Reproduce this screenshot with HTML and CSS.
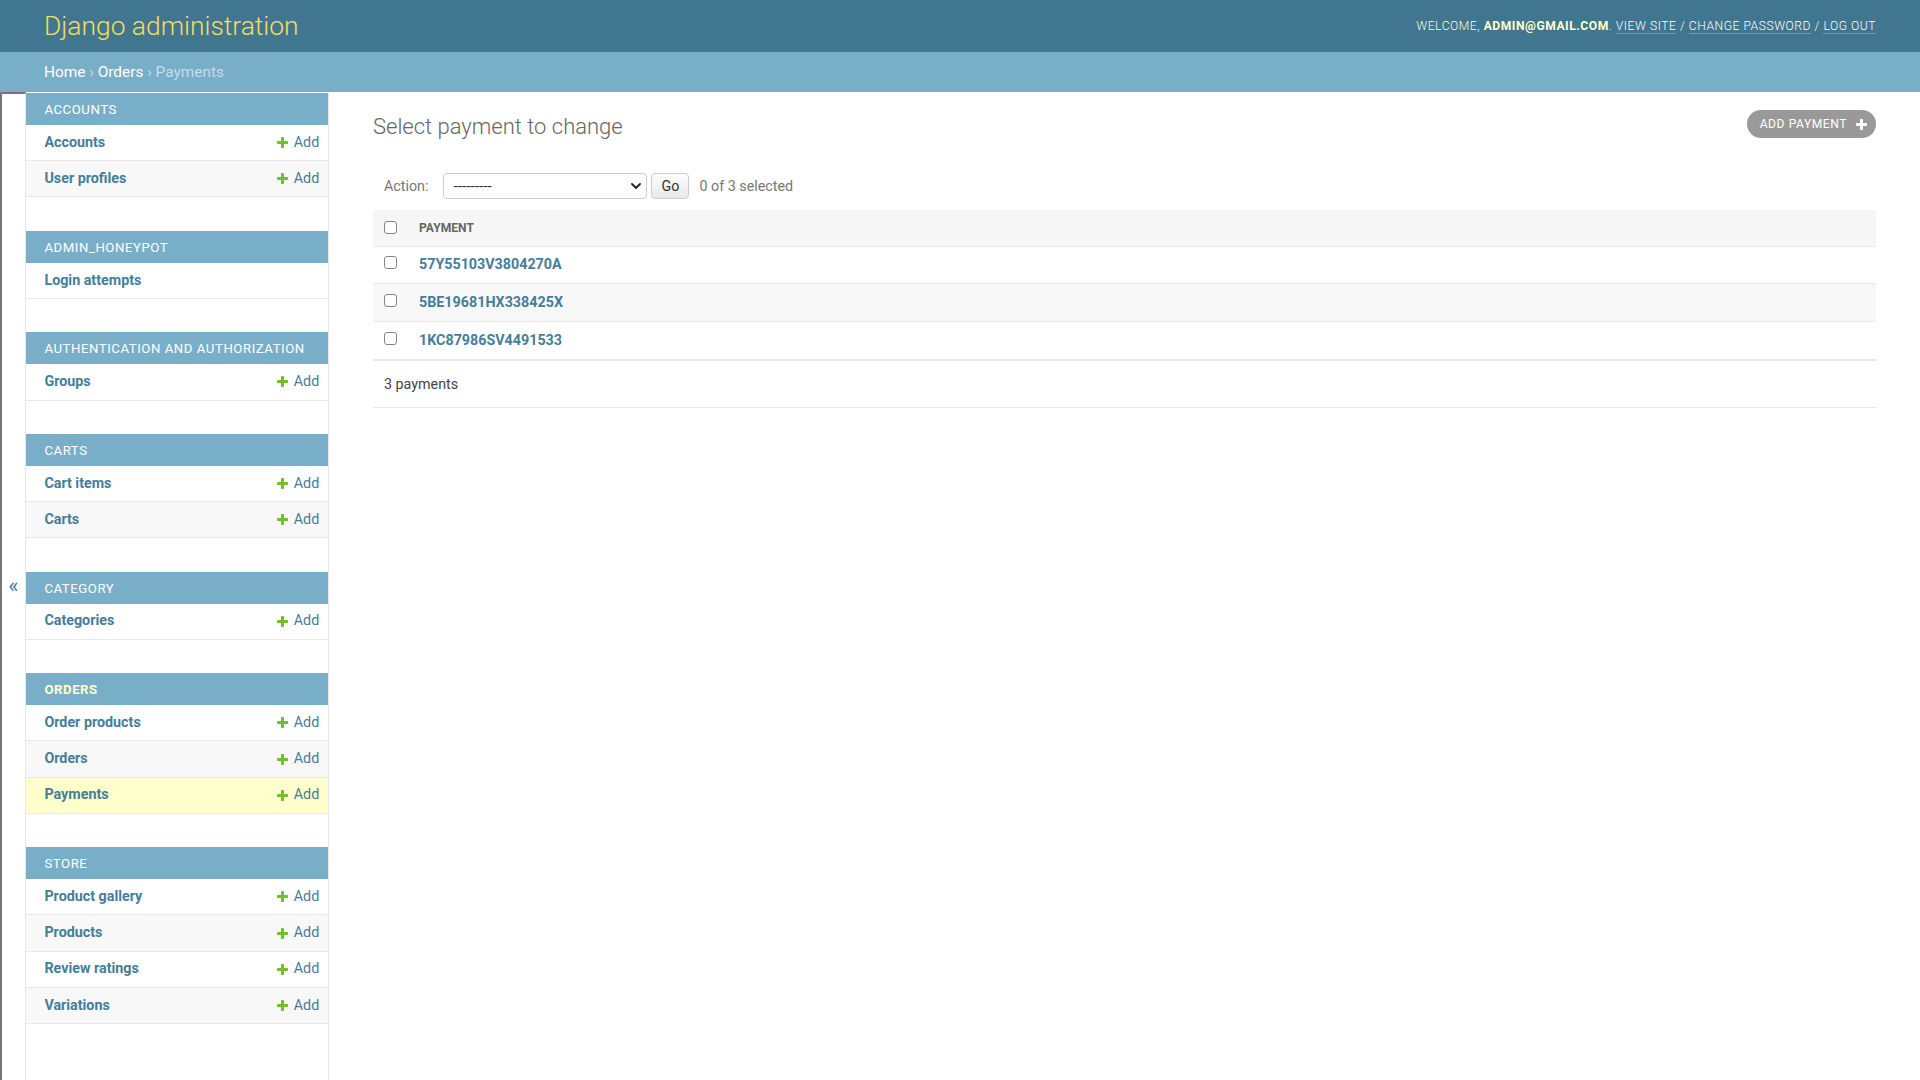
FILE: index.html
```html
<!DOCTYPE html>
<html lang="en">
<head>
<meta charset="utf-8">
<title>Select payment to change | Django site admin</title>
<link rel="stylesheet" href="styles.css">
</head>
<body>
<div class="page">
  <header class="header">
    <h1 class="site-name"><a href="#">Django administration</a></h1>
    <div class="user-tools">WELCOME, <strong>ADMIN@GMAIL.COM</strong>. <a href="#">VIEW SITE</a> / <a href="#">CHANGE PASSWORD</a> / <a href="#">LOG OUT</a></div>
  </header>
  <nav class="breadcrumbs"><a href="#">Home</a> &rsaquo; <a href="#">Orders</a> &rsaquo; Payments</nav>
  <div class="main">
    <button class="toggle-nav" type="button">&laquo;</button>
    <nav class="nav-sidebar">
      <div class="module">
        <div class="caption"><a href="#">ACCOUNTS</a></div>
        <div class="row"><a class="model" href="#">Accounts</a><a class="addlink" href="#"><svg class="plus" viewBox="192 188 1408 1408" width="11" height="11"><path fill="#70bf2b" d="M1600 796v192q0 40-28 68t-68 28h-416v416q0 40-28 68t-68 28h-192q-40 0-68-28t-28-68v-416h-416q-40 0-68-28t-28-68v-192q0-40 28-68t68-28h416v-416q0-40 28-68t68-28h192q40 0 68 28t28 68v416h416q40 0 68 28t28 68z"/></svg>Add</a></div>
        <div class="row alt"><a class="model" href="#">User profiles</a><a class="addlink" href="#"><svg class="plus" viewBox="192 188 1408 1408" width="11" height="11"><path fill="#70bf2b" d="M1600 796v192q0 40-28 68t-68 28h-416v416q0 40-28 68t-68 28h-192q-40 0-68-28t-28-68v-416h-416q-40 0-68-28t-28-68v-192q0-40 28-68t68-28h416v-416q0-40 28-68t68-28h192q40 0 68 28t28 68v416h416q40 0 68 28t28 68z"/></svg>Add</a></div>
      </div>
      <div class="module">
        <div class="caption"><a href="#">ADMIN_HONEYPOT</a></div>
        <div class="row"><a class="model" href="#">Login attempts</a></div>
      </div>
      <div class="module">
        <div class="caption"><a href="#">AUTHENTICATION AND AUTHORIZATION</a></div>
        <div class="row"><a class="model" href="#">Groups</a><a class="addlink" href="#"><svg class="plus" viewBox="192 188 1408 1408" width="11" height="11"><path fill="#70bf2b" d="M1600 796v192q0 40-28 68t-68 28h-416v416q0 40-28 68t-68 28h-192q-40 0-68-28t-28-68v-416h-416q-40 0-68-28t-28-68v-192q0-40 28-68t68-28h416v-416q0-40 28-68t68-28h192q40 0 68 28t28 68v416h416q40 0 68 28t28 68z"/></svg>Add</a></div>
      </div>
      <div class="module">
        <div class="caption"><a href="#">CARTS</a></div>
        <div class="row"><a class="model" href="#">Cart items</a><a class="addlink" href="#"><svg class="plus" viewBox="192 188 1408 1408" width="11" height="11"><path fill="#70bf2b" d="M1600 796v192q0 40-28 68t-68 28h-416v416q0 40-28 68t-68 28h-192q-40 0-68-28t-28-68v-416h-416q-40 0-68-28t-28-68v-192q0-40 28-68t68-28h416v-416q0-40 28-68t68-28h192q40 0 68 28t28 68v416h416q40 0 68 28t28 68z"/></svg>Add</a></div>
        <div class="row alt"><a class="model" href="#">Carts</a><a class="addlink" href="#"><svg class="plus" viewBox="192 188 1408 1408" width="11" height="11"><path fill="#70bf2b" d="M1600 796v192q0 40-28 68t-68 28h-416v416q0 40-28 68t-68 28h-192q-40 0-68-28t-28-68v-416h-416q-40 0-68-28t-28-68v-192q0-40 28-68t68-28h416v-416q0-40 28-68t68-28h192q40 0 68 28t28 68v416h416q40 0 68 28t28 68z"/></svg>Add</a></div>
      </div>
      <div class="module">
        <div class="caption"><a href="#">CATEGORY</a></div>
        <div class="row"><a class="model" href="#">Categories</a><a class="addlink" href="#"><svg class="plus" viewBox="192 188 1408 1408" width="11" height="11"><path fill="#70bf2b" d="M1600 796v192q0 40-28 68t-68 28h-416v416q0 40-28 68t-68 28h-192q-40 0-68-28t-28-68v-416h-416q-40 0-68-28t-28-68v-192q0-40 28-68t68-28h416v-416q0-40 28-68t68-28h192q40 0 68 28t28 68v416h416q40 0 68 28t28 68z"/></svg>Add</a></div>
      </div>
      <div class="module current-app">
        <div class="caption"><a href="#">ORDERS</a></div>
        <div class="row"><a class="model" href="#">Order products</a><a class="addlink" href="#"><svg class="plus" viewBox="192 188 1408 1408" width="11" height="11"><path fill="#70bf2b" d="M1600 796v192q0 40-28 68t-68 28h-416v416q0 40-28 68t-68 28h-192q-40 0-68-28t-28-68v-416h-416q-40 0-68-28t-28-68v-192q0-40 28-68t68-28h416v-416q0-40 28-68t68-28h192q40 0 68 28t28 68v416h416q40 0 68 28t28 68z"/></svg>Add</a></div>
        <div class="row alt"><a class="model" href="#">Orders</a><a class="addlink" href="#"><svg class="plus" viewBox="192 188 1408 1408" width="11" height="11"><path fill="#70bf2b" d="M1600 796v192q0 40-28 68t-68 28h-416v416q0 40-28 68t-68 28h-192q-40 0-68-28t-28-68v-416h-416q-40 0-68-28t-28-68v-192q0-40 28-68t68-28h416v-416q0-40 28-68t68-28h192q40 0 68 28t28 68v416h416q40 0 68 28t28 68z"/></svg>Add</a></div>
        <div class="row current"><a class="model" href="#">Payments</a><a class="addlink" href="#"><svg class="plus" viewBox="192 188 1408 1408" width="11" height="11"><path fill="#70bf2b" d="M1600 796v192q0 40-28 68t-68 28h-416v416q0 40-28 68t-68 28h-192q-40 0-68-28t-28-68v-416h-416q-40 0-68-28t-28-68v-192q0-40 28-68t68-28h416v-416q0-40 28-68t68-28h192q40 0 68 28t28 68v416h416q40 0 68 28t28 68z"/></svg>Add</a></div>
      </div>
      <div class="module">
        <div class="caption"><a href="#">STORE</a></div>
        <div class="row"><a class="model" href="#">Product gallery</a><a class="addlink" href="#"><svg class="plus" viewBox="192 188 1408 1408" width="11" height="11"><path fill="#70bf2b" d="M1600 796v192q0 40-28 68t-68 28h-416v416q0 40-28 68t-68 28h-192q-40 0-68-28t-28-68v-416h-416q-40 0-68-28t-28-68v-192q0-40 28-68t68-28h416v-416q0-40 28-68t68-28h192q40 0 68 28t28 68v416h416q40 0 68 28t28 68z"/></svg>Add</a></div>
        <div class="row alt"><a class="model" href="#">Products</a><a class="addlink" href="#"><svg class="plus" viewBox="192 188 1408 1408" width="11" height="11"><path fill="#70bf2b" d="M1600 796v192q0 40-28 68t-68 28h-416v416q0 40-28 68t-68 28h-192q-40 0-68-28t-28-68v-416h-416q-40 0-68-28t-28-68v-192q0-40 28-68t68-28h416v-416q0-40 28-68t68-28h192q40 0 68 28t28 68v416h416q40 0 68 28t28 68z"/></svg>Add</a></div>
        <div class="row"><a class="model" href="#">Review ratings</a><a class="addlink" href="#"><svg class="plus" viewBox="192 188 1408 1408" width="11" height="11"><path fill="#70bf2b" d="M1600 796v192q0 40-28 68t-68 28h-416v416q0 40-28 68t-68 28h-192q-40 0-68-28t-28-68v-416h-416q-40 0-68-28t-28-68v-192q0-40 28-68t68-28h416v-416q0-40 28-68t68-28h192q40 0 68 28t28 68v416h416q40 0 68 28t28 68z"/></svg>Add</a></div>
        <div class="row alt"><a class="model" href="#">Variations</a><a class="addlink" href="#"><svg class="plus" viewBox="192 188 1408 1408" width="11" height="11"><path fill="#70bf2b" d="M1600 796v192q0 40-28 68t-68 28h-416v416q0 40-28 68t-68 28h-192q-40 0-68-28t-28-68v-416h-416q-40 0-68-28t-28-68v-192q0-40 28-68t68-28h416v-416q0-40 28-68t68-28h192q40 0 68 28t28 68v416h416q40 0 68 28t28 68z"/></svg>Add</a></div>
      </div>
    </nav>
    <main class="content">
      <div class="content-head">
        <h1 class="title">Select payment to change</h1>
        <a class="object-tool" href="#">ADD PAYMENT<svg class="tool-plus" viewBox="192 188 1408 1408" width="11" height="11"><path fill="#fff" d="M1600 796v192q0 40-28 68t-68 28h-416v416q0 40-28 68t-68 28h-192q-40 0-68-28t-28-68v-416h-416q-40 0-68-28t-28-68v-192q0-40 28-68t68-28h416v-416q0-40 28-68t68-28h192q40 0 68 28t28 68v416h416q40 0 68 28t28 68z"/></svg></a>
      </div>
      <div class="changelist">
        <div class="actions">
          <label class="action-label">Action:</label>
          <span class="select-wrap">
            <select class="action-select"><option>---------</option><option>Delete selected payments</option></select>
            <svg class="chevron" viewBox="0 0 10 6" width="10" height="6"><polyline points="1,1 5,5 9,1" fill="none" stroke="#222" stroke-width="1.8" stroke-linecap="round" stroke-linejoin="round"/></svg>
          </span>
          <button class="go" type="button">Go</button>
          <span class="counter">0 of 3 selected</span>
        </div>
        <table class="result-list">
          <thead>
            <tr><th class="cb"><input type="checkbox" class="check"></th><th class="col">PAYMENT</th></tr>
          </thead>
          <tbody>
            <tr><td class="cb"><input type="checkbox" class="check"></td><td><a class="pay" href="#">57Y55103V3804270A</a></td></tr>
            <tr class="alt"><td class="cb"><input type="checkbox" class="check"></td><td><a class="pay" href="#">5BE19681HX338425X</a></td></tr>
            <tr><td class="cb"><input type="checkbox" class="check"></td><td><a class="pay" href="#">1KC87986SV4491533</a></td></tr>
          </tbody>
        </table>
        <p class="paginator">3 payments</p>
      </div>
    </main>
  </div>
</div>
</body>
</html>
```
FILE: styles.css
```css
* {
  box-sizing: border-box;
}

html,
body {
  margin: 0;
  padding: 0;
}

body {
  font-family: Roboto, "Noto Sans", "DejaVu Sans", sans-serif;
  font-size: 15.4px;
  color: #333;
  background: #fff;
}

a {
  color: #447e9b;
  text-decoration: none;
}

.page {
  min-height: 100vh;
  display: flex;
  flex-direction: column;
}

/* Header */
.header {
  height: 52px;
  padding: 0 44px;
  background: #417690;
  color: #ffc;
  display: flex;
  justify-content: space-between;
  align-items: center;
}

.site-name {
  margin: 0;
  font-size: 26.4px;
  font-weight: 300;
  line-height: 30px;
}

.site-name a {
  color: #f5dd5d;
}

.user-tools {
  font-size: 12.1px;
  font-weight: 300;
  letter-spacing: 0.55px;
  line-height: 16px;
  text-transform: uppercase;
  color: #ffc;
  white-space: nowrap;
}

.user-tools strong {
  font-weight: 700;
}

.user-tools a {
  color: #fff;
  border-bottom: 1px solid rgba(255, 255, 255, 0.25);
}

/* Breadcrumbs */
.breadcrumbs {
  height: 40px;
  padding: 0 44px;
  line-height: 40px;
  background: #79aec8;
  color: #c4dce8;
  font-size: 15.4px;
}

.breadcrumbs a {
  color: #fff;
}

/* Main */
.main {
  flex: 1 0 auto;
  display: flex;
}

.toggle-nav {
  flex: 0 0 26px;
  width: 26px;
  padding: 0 0 4px;
  margin: 0;
  border: 0;
  border-left: 2px solid #767676;
  border-top: 2px solid #767676;
  border-right: 1px solid #e8e8e8;
  background: #fff;
  color: #447e9b;
  font-family: Roboto, "Noto Sans", sans-serif;
  font-size: 22px;
  display: flex;
  align-items: center;
  justify-content: center;
}

.nav-sidebar {
  flex: 0 0 303px;
  width: 303px;
  border-top: 1px solid transparent;
  border-right: 1px solid #e8e8e8;
  background: #fff;
}

.module {
  margin-bottom: 33.4px;
}

.caption {
  height: 32px;
  padding: 1px 8.8px 0 18.4px;
  line-height: 31px;
  background: #79aec8;
  font-size: 13.2px;
  letter-spacing: 0.55px;
  text-transform: uppercase;
}

.caption a {
  color: #fff;
}

.current-app .caption a {
  color: #ffc;
  font-weight: 700;
}

.row {
  display: flex;
  align-items: flex-start;
  border-bottom: 1px solid #e8e8e8;
  font-size: 14.3px;
  line-height: 17.6px;
  background: #fff;
}

.row.alt {
  background: #f8f8f8;
}

.row.current {
  background: #ffc;
}

.model {
  flex: 1 1 auto;
  padding: 8.8px 8.8px 8.8px 18.4px;
  font-weight: 700;
}

.addlink {
  display: flex;
  align-items: center;
  gap: 6px;
  height: 35.2px;
  padding: 0 8.8px;
  white-space: nowrap;
}

.plus {
  display: block;
}

/* Content */
.content {
  flex: 1 1 0;
  min-width: 0;
  padding: 22px 44px;
}

.content-head {
  display: flex;
  justify-content: space-between;
  align-items: flex-start;
  margin-bottom: 22px;
}

.title {
  margin: 0;
  font-size: 22px;
  font-weight: 300;
  line-height: 26px;
  color: #666;
}

.object-tool {
  margin-top: -4px;
  height: 28px;
  padding: 0 9px 0 13px;
  display: flex;
  align-items: center;
  gap: 9px;
  border-radius: 15px;
  background: #999;
  color: #fff;
  font-size: 12.1px;
  letter-spacing: 0.55px;
  text-transform: uppercase;
}

.tool-plus {
  display: block;
}

.actions {
  padding: 11px;
  display: flex;
  align-items: center;
  height: 48.4px;
  color: #777;
  font-size: 14.3px;
}

.select-wrap {
  position: relative;
  display: inline-block;
  margin-left: 15px;
}

.action-select {
  display: block;
  width: 204px;
  height: 26px;
  margin: 0;
  padding: 0 0 0 9px;
  appearance: none;
  -webkit-appearance: none;
  border: 1px solid #ccc;
  border-radius: 4px;
  background: #fff;
  color: #333;
  font-family: Roboto, "Noto Sans", sans-serif;
  font-size: 15.4px;
}

.chevron {
  position: absolute;
  right: 6px;
  top: 10px;
}

.go {
  width: 38px;
  height: 26px;
  margin: 0 0 0 4px;
  padding: 0;
  border: 1px solid #ccc;
  border-radius: 4px;
  background: linear-gradient(#fdfdfd, #e9e9e9);
  color: #333;
  font-family: Roboto, "Noto Sans", sans-serif;
  font-size: 14.3px;
}

.counter {
  margin-left: 10px;
}

.result-list {
  width: 100%;
  border-collapse: collapse;
}

.result-list th {
  height: 36px;
  padding: 0 11px;
  text-align: left;
  vertical-align: middle;
  background: #f6f6f6;
  border-bottom: 1px solid #e8e8e8;
  color: #666;
  font-size: 12.1px;
  font-weight: 700;
  text-transform: uppercase;
}

.result-list th .check {
  margin-top: -2px;
}

.result-list td {
  padding: 9.5px 11px;
  line-height: 17.6px;
  vertical-align: top;
  border-bottom: 1px solid #e8e8e8;
  font-size: 14.3px;
}

.result-list tr.alt td {
  background: #f8f8f8;
}

.result-list .cb {
  width: 35px;
}

.check {
  appearance: none;
  -webkit-appearance: none;
  display: block;
  width: 13px;
  height: 13px;
  margin: 0;
  border: 1px solid #858585;
  border-radius: 3px;
  background: #fff;
}

.pay {
  font-weight: 700;
}

.paginator {
  margin: 0;
  padding: 11px;
  line-height: 24.2px;
  border-top: 1px solid #e8e8e8;
  border-bottom: 1px solid #e8e8e8;
  color: #444;
  font-size: 14.3px;
}
```
